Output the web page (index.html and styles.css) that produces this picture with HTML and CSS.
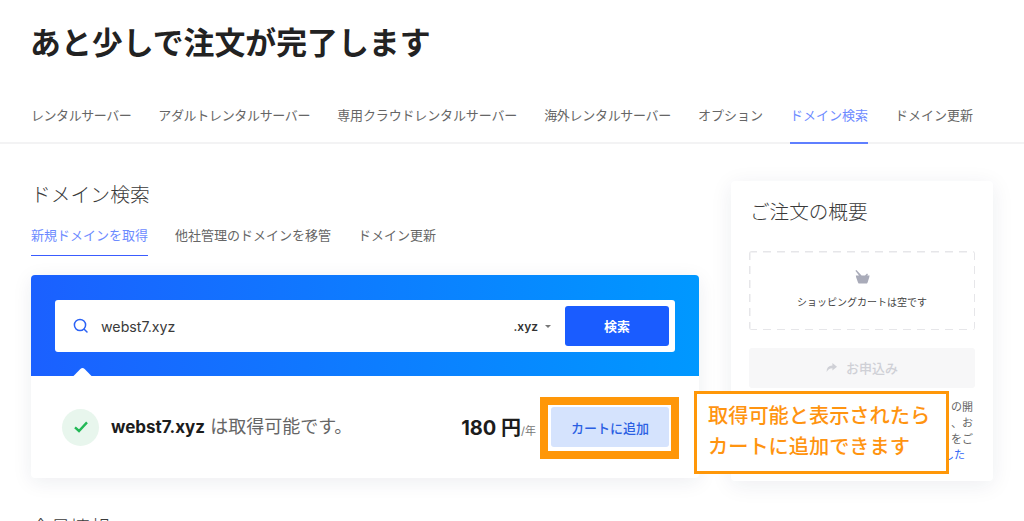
FILE: index.html
```html
<!DOCTYPE html>
<html lang="ja">
<head>
<meta charset="utf-8">
<title>あと少しで注文が完了します</title>
<link rel="stylesheet" href="styles.css">
</head>
<body>
<div class="page">
  <header class="top">
    <h1 class="title">あと少しで注文が完了します</h1>
    <nav class="nav">
      <a class="nav-item tight-l">レンタルサーバー</a>
      <a class="nav-item tight-m">アダルトレンタルサーバー</a>
      <a class="nav-item tight-xs">専用クラウドレンタルサーバー</a>
      <a class="nav-item tight-s">海外レンタルサーバー</a>
      <a class="nav-item">オプション</a>
      <a class="nav-item is-active">ドメイン検索</a>
      <a class="nav-item">ドメイン更新</a>
    </nav>
  </header>
  <div class="content">
    <main class="left">
      <h2 class="heading">ドメイン検索</h2>
      <div class="tabs">
        <a class="tab is-active">新規ドメインを取得</a>
        <a class="tab">他社管理のドメインを移管</a>
        <a class="tab">ドメイン更新</a>
      </div>
      <section class="domain-card">
        <div class="search-panel">
          <div class="search-bar">
            <svg class="search-icon" width="16" height="16" viewBox="0 0 16 16" fill="none" stroke="#2b62f5" stroke-width="1.5" stroke-linecap="round"><circle cx="7" cy="7" r="5.6"/><path d="M11.2 11.2L14 14"/></svg>
            <span class="search-text">webst7.xyz</span>
            <span class="tld">.xyz</span>
            <span class="caret"></span>
            <button class="search-btn">検索</button>
          </div>
          <span class="notch"></span>
        </div>
        <div class="result">
          <span class="check">
            <svg width="14" height="12" viewBox="0 0 14 12" fill="none" stroke="#22b856" stroke-width="2.4"><path d="M1 6.4L5 10L13 1.4"/></svg>
          </span>
          <p class="result-text"><b class="result-domain">webst7.xyz</b> は取得可能です。</p>
          <p class="price"><b class="price-num">180 円</b><span class="price-unit">/年</span></p>
          <button class="cart-btn">カートに追加</button>
          <span class="btn-highlight"></span>
        </div>
      </section>
      <h2 class="heading member">会員情報</h2>
    </main>
    <aside class="summary">
      <h2 class="heading summary-title">ご注文の概要</h2>
      <div class="empty-cart">
        <svg class="basket" width="15" height="14" viewBox="0 0 15 14" fill="#a9abb9"><path d="M0.4 0.8L1.4 0L6.6 5.6L10 5.6L12 3.6L13 4.2L12.2 5.6L14.6 5.6L14.2 7.4L12.6 12.4Q12.2 13.6 11 13.6L4.6 13.6Q3.4 13.6 3 12.4L1.2 7.4L0.8 5.6L4 5.6Z"/></svg>
        <p class="empty-text">ショッピングカートは空です</p>
      </div>
      <button class="apply-btn">
        <svg width="11" height="9" viewBox="0 0 11 9" fill="#cfd0d6"><path d="M6.4 0L11 3.8L6.4 7.6V5.2Q2.6 5 0.6 9Q0.4 3 6.4 2.6Z"/></svg>
        お申込み
      </button>
      <div class="note">
        <p class="note-line">の開</p>
        <p class="note-line">、お</p>
        <p class="note-line">をご</p>
        <p class="note-line note-link">した</p>
      </div>
    </aside>
  </div>
  <div class="callout">取得可能と表示されたら<br>カートに追加できます</div>
</div>
</body>
</html>
```
FILE: styles.css
```css
* { box-sizing: border-box; }
html, body { margin: 0; padding: 0; height: 521px; overflow: hidden; background: #fff; }
body { font-family: "Inter", "Noto Sans CJK JP", sans-serif; color: #333; }
h1, h2, p { margin: 0; }
button { font-family: inherit; border: 0; padding: 0; }

.page { position: relative; width: 1024px; height: 521px; overflow: hidden; }

.top { height: 144px; border-bottom: 2px solid #f3f3f4; }
.title { height: 87px; padding: 21px 0 0 30px; font-size: 30.9px; line-height: 44px; font-weight: 700; color: #222; }
.nav { display: flex; gap: 27px; padding-left: 31px; height: 57px; }
.nav-item { height: 57px; padding-top: 20px; font-size: 13px; line-height: 17px; color: #666; white-space: nowrap; }
.tight-l { letter-spacing: -.45px; }
.tight-m { letter-spacing: -.33px; }
.tight-s { letter-spacing: -.3px; }
.tight-xs { letter-spacing: -.14px; }
.nav-item.is-active { color: #6d8bff; border-bottom: 2px solid #5f7fff; }

.content { display: flex; padding: 37px 31px 0; gap: 32px; align-items: flex-start; }
.left { width: 668px; flex: none; }
.heading { font-size: 19.8px; line-height: 28px; font-weight: 300; color: #3a3a3a; }

.tabs { display: flex; gap: 27px; margin-top: 6px; height: 60px; }
.tab { height: 41px; padding-top: 10px; font-size: 13px; line-height: 20px; color: #666; white-space: nowrap; }
.tab.is-active { color: #6d8bff; border-bottom: 1px solid #3a5cff; }

.domain-card { border-radius: 4px; background: #fff; box-shadow: 0 4px 20px rgba(30, 40, 80, .08); }
.search-panel { position: relative; height: 101px; padding: 25px 24px 0; border-radius: 4px 4px 0 0; overflow: hidden; background: linear-gradient(90deg, #1b60ff, #0098ff); }
.search-bar { display: flex; align-items: center; height: 52px; padding: 0 6px 0 18px; background: #fff; border-radius: 3px; }
.search-icon { flex: none; }
.search-text { flex: 1; margin-left: 12px; font-size: 14.2px; color: #3a3a3a; }
.tld { font-size: 12px; font-weight: 600; color: #333; }
.caret { width: 0; height: 0; margin: 0 14px 0 7px; border: 3px solid transparent; border-top: 3.5px solid #777; border-bottom: 0; }
.search-btn { width: 104px; height: 40px; padding-bottom: 2px; border-radius: 3px; background: #1a5cff; color: #fff; font-size: 13px; font-weight: 700; }
.notch { position: absolute; left: 44px; top: 95px; width: 15px; height: 15px; background: #fff; border-radius: 3px; transform: rotate(45deg); }

.result { position: relative; display: flex; align-items: center; height: 102px; padding: 0 30px 0 31px; }
.check { display: flex; align-items: center; justify-content: center; width: 37px; height: 37px; border-radius: 50%; background: #e8f6ed; flex: none; }
.result-text { flex: 1; margin-left: 12px; font-size: 18px; line-height: 24px; color: #666; white-space: nowrap; }
.result-domain { font-weight: 700; color: #1c1c1c; font-size: 17px; }
.price { margin-right: 15px; padding-bottom: 2px; white-space: nowrap; }
.price-num { font-size: 20px; font-weight: 700; color: #1c1c1c; }
.price-unit { font-size: 11px; color: #777; }
.cart-btn { width: 118px; height: 40px; border-radius: 3px; background: #d5e3fd; color: #2b5fe3; font-size: 13px; font-weight: 500; flex: none; }
.btn-highlight { position: absolute; left: 509px; top: 21px; width: 139px; height: 62px; border: 8px solid #ff9708; pointer-events: none; }

.member { margin-top: 36px; }

.summary { width: 262px; height: 300px; flex: none; padding: 16px 18px 0; border-radius: 4px; background: #fff; box-shadow: 0 4px 22px rgba(30, 40, 80, .08); }
.summary-title { padding-left: 1px; line-height: 30px; font-size: 19.6px; }
.empty-cart { display: flex; flex-direction: column; align-items: center; height: 79px; margin-top: 24px; padding-top: 19px; border-radius: 3px;
  background-image:
    repeating-linear-gradient(90deg, #e6e6e9 0 8px, transparent 8px 14px),
    repeating-linear-gradient(90deg, #e6e6e9 0 8px, transparent 8px 14px),
    repeating-linear-gradient(0deg, #e6e6e9 0 8px, transparent 8px 14px),
    repeating-linear-gradient(0deg, #e6e6e9 0 8px, transparent 8px 14px);
  background-size: 100% 1.5px, 100% 1.5px, 1.5px 100%, 1.5px 100%;
  background-position: left top, left bottom, left top, right top;
  background-repeat: no-repeat;
}
.empty-text { margin-top: 10px; font-size: 10px; line-height: 16px; color: #444; }
.apply-btn { display: flex; align-items: center; justify-content: center; gap: 9px; width: 226px; height: 40px; margin-top: 18px; padding-bottom: 2px; border-radius: 3px; background: #f7f7f8; color: #cfd0d6; font-size: 13px; font-weight: 500; }
.note { margin-top: 11px; padding-right: 2px; }
.note-line { font-size: 11px; line-height: 16px; color: #666; text-align: right; }
.note-link { color: #2b62f5; padding-right: 8px; }

.callout { position: absolute; left: 694px; top: 391px; width: 255px; height: 83px; padding: 6px 0 0 11px; border: 3.5px solid #ff9708; background: #fff; color: #ff9410; font-size: 20.2px; line-height: 31px; font-weight: 500; white-space: nowrap; }
```
